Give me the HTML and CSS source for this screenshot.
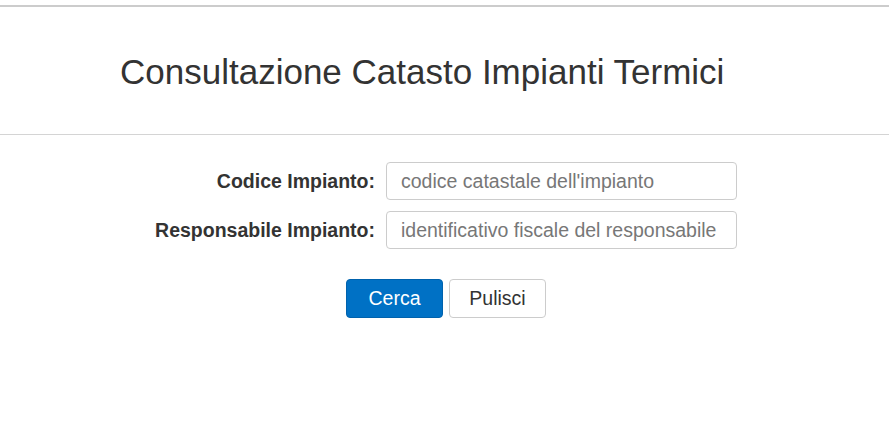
FILE: index.html
```html
<!DOCTYPE html>
<html lang="it">
<head>
    <meta charset="UTF-8">
    <meta name="viewport" content="width=device-width, initial-scale=1.0">
    <title>Consultazione Catasto Impianti Termici</title>
    <link rel="stylesheet" href="styles.css">
</head>
<body>
    <div class="page">
        <div class="header">
            <h1>Consultazione Catasto Impianti Termici</h1>
        </div>

        <form class="search-form" onsubmit="return false;">
            <div class="fields">
                <label for="codice">Codice Impianto:</label>
                <input type="text" id="codice" placeholder="codice catastale dell'impianto">

                <label for="responsabile">Responsabile Impianto:</label>
                <input type="text" id="responsabile" placeholder="identificativo fiscale del responsabile">
            </div>

            <div class="actions">
                <button type="submit" class="btn btn-primary">Cerca</button>
                <button type="reset" class="btn btn-default">Pulisci</button>
            </div>
        </form>
    </div>
</body>
</html>
```

FILE: styles.css
```css
body {
    margin: 0;
    padding: 0;
    background-color: #fff;
    font-family: "Liberation Sans", Arial, Helvetica, sans-serif;
    color: #333;
}

.page {
    margin-top: 5px;
    border-top: 2px solid #cccccc;
}

.header {
    padding: 45px 0 42px 120px;
    border-bottom: 1px solid #d4d4d4;
}

.header h1 {
    margin: 0;
    font-size: 35px;
    font-weight: normal;
    line-height: 40px;
    color: #333;
}

.search-form {
    padding-top: 27px;
}

.fields {
    display: grid;
    grid-template-columns: 375px 351px;
    column-gap: 11px;
    row-gap: 11px;
    align-items: center;
}

.fields label {
    text-align: right;
    font-size: 19.5px;
    font-weight: bold;
    color: #333;
}

.fields input {
    box-sizing: border-box;
    height: 38px;
    width: 351px;
    padding: 6px 14px;
    font-family: inherit;
    font-size: 19.5px;
    color: #555;
    border: 1px solid #cccccc;
    border-radius: 4px;
    outline: none;
}

.fields input::placeholder {
    color: #777;
}

.actions {
    display: flex;
    justify-content: center;
    gap: 6px;
    margin-top: 30px;
    padding-left: 3px;
}

.btn {
    box-sizing: border-box;
    width: 97px;
    height: 39px;
    font-family: inherit;
    font-size: 19.5px;
    border-radius: 4px;
    cursor: pointer;
}

.btn-primary {
    background-color: #0071c5;
    border: 1px solid #0062ad;
    color: #fff;
}

.btn-default {
    background-color: #fff;
    border: 1px solid #cccccc;
    color: #333;
}
```
